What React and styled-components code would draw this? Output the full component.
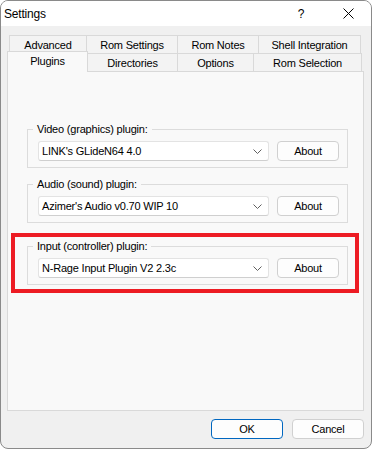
import React from "react";
import styled, { createGlobalStyle } from "styled-components";

const Global = createGlobalStyle`
  html, body { margin: 0; padding: 0; background: #ffffff; }
  body { font-family: "Liberation Sans", Arial, sans-serif; font-size: 11px; color: #000; letter-spacing: -0.2px; }
  * { box-sizing: border-box; }
`;

const Window = styled.div`
  width: 372px;
  height: 449px;
  border: 1px solid #8a8a8a;
  border-radius: 8px;
  background: #f0f0f0;
  overflow: hidden;
  display: flex;
  flex-direction: column;
`;

const TitleBar = styled.div`
  height: 25px;
  background: #ffffff;
  display: flex;
  align-items: center;
  padding-left: 3px;
  font-size: 12px;
`;

const Title = styled.div`
  flex: 1;
`;

const HelpGlyph = styled.div`
  width: 46px;
  text-align: center;
  font-size: 12px;
  padding-right: 2px;
`;

const CloseBtn = styled.div`
  width: 46px;
  display: flex;
  justify-content: center;
  align-items: center;
`;

const Body = styled.div`
  flex: 1;
  display: flex;
  flex-direction: column;
  padding: 9px 7px 0 6px;
`;

const TabRow = styled.div`
  display: flex;
  height: 18px;
  padding-left: ${(p) => p.$indent}px;
`;

const Tab = styled.div`
  width: ${(p) => p.$w}px;
  height: ${(p) => (p.$active ? 21 : 18)}px;
  margin-top: ${(p) => (p.$active ? -2 : 0)}px;
  margin-left: ${(p) => (p.$active ? -2 : 0)}px;
  margin-right: -1px;
  border: 1px solid #d9d9d9;
  border-bottom: none;
  background: ${(p) => (p.$active ? "#f9f9f9" : "#f3f3f3")};
  display: flex;
  justify-content: center;
  align-items: center;
  padding-bottom: ${(p) => (p.$active ? 3 : 0)}px;
  position: relative;
  z-index: ${(p) => (p.$active ? 2 : 0)};
  white-space: nowrap;
`;

const Panel = styled.div`
  height: 340px;
  border: 1px solid #d9d9d9;
  background: #f9f9f9;
  padding: 49px 15px 0 19px;
  display: flex;
  flex-direction: column;
`;

const Group = styled.fieldset`
  margin: ${(p) => p.$mt}px 0 0 0;
  padding: 4px 7px 6px 10px;
  border: 1px solid #dcdcdc;
  min-width: 0;
  display: flex;
  align-items: center;
  gap: 8px;
`;

const Legend = styled.legend`
  padding: 0 4px;
  margin-left: -5px;
  line-height: 16px;
  font-size: 11px;
`;

const Controls = styled.div`
  display: flex;
  gap: 8px;
  width: 100%;
`;

const Select = styled.div`
  width: 231px;
  height: 20px;
  background: #ffffff;
  border: 1px solid #e3e3e3;
  border-bottom-color: #cfcfcf;
  border-radius: 3px;
  display: flex;
  align-items: center;
  padding-left: 3px;
  padding-right: 6px;
`;

const SelectText = styled.span`
  flex: 1;
  white-space: nowrap;
`;

const Button = styled.div`
  width: ${(p) => p.$w}px;
  height: 20px;
  border: 1px solid ${(p) => (p.$primary ? "#0067c0" : "#d0d0d0")};
  border-radius: 4px;
  background: #fdfdfd;
  display: flex;
  align-items: center;
  justify-content: center;
`;

const Highlight = styled.div`
  margin: 10px -11px 0 -16px;
  border: 4px solid #ed1c24;
  padding: 1px 7px 4px 12px;
  display: flex;
  flex-direction: column;
`;

const Footer = styled.div`
  display: flex;
  justify-content: flex-end;
  gap: 9px;
  padding-top: 8px;
`;

const Chevron = () => (
  <svg width="9" height="5" viewBox="0 0 9 5">
    <path d="M0.5 0.5 L4.5 4.5 L8.5 0.5" fill="none" stroke="#606060" strokeWidth="1" />
  </svg>
);

const CloseIcon = () => (
  <svg width="11" height="11" viewBox="0 0 11 11">
    <path d="M0.5 0.5 L10.5 10.5 M10.5 0.5 L0.5 10.5" stroke="#000" strokeWidth="1" />
  </svg>
);

const row1 = [
  { label: "Advanced", w: 78 },
  { label: "Rom Settings", w: 92 },
  { label: "Rom Notes", w: 82 },
  { label: "Shell Integration", w: 103 },
];
const row2 = [
  { label: "Plugins", w: 81, active: true },
  { label: "Directories", w: 91 },
  { label: "Options", w: 77 },
  { label: "Rom Selection", w: 109 },
];

const PluginGroup = ({ legend, value, mt = 0 }) => (
  <Group $mt={mt}>
    <Legend>{legend}</Legend>
    <Controls>
      <Select>
        <SelectText>{value}</SelectText>
        <Chevron />
      </Select>
      <Button $w={62}>About</Button>
    </Controls>
  </Group>
);

export default function App() {
  return (
    <>
      <Global />
      <Window>
        <TitleBar>
          <Title>Settings</Title>
          <HelpGlyph>?</HelpGlyph>
          <CloseBtn>
            <CloseIcon />
          </CloseBtn>
        </TitleBar>
        <Body>
          <TabRow $indent={2}>
            {row1.map((t) => (
              <Tab key={t.label} $w={t.w}>{t.label}</Tab>
            ))}
          </TabRow>
          <TabRow $indent={2}>
            {row2.map((t) => (
              <Tab key={t.label} $w={t.w} $active={t.active}>{t.label}</Tab>
            ))}
          </TabRow>
          <Panel>
            <PluginGroup legend="Video (graphics) plugin:" value="LINK's GLideN64 4.0" />
            <PluginGroup legend="Audio (sound) plugin:" value="Azimer's Audio v0.70 WIP 10" mt={8} />
            <Highlight>
              <PluginGroup legend="Input (controller) plugin:" value="N-Rage Input Plugin V2 2.3c" />
            </Highlight>
          </Panel>
          <Footer>
            <Button $w={72} $primary>OK</Button>
            <Button $w={72}>Cancel</Button>
          </Footer>
        </Body>
      </Window>
    </>
  );
}
